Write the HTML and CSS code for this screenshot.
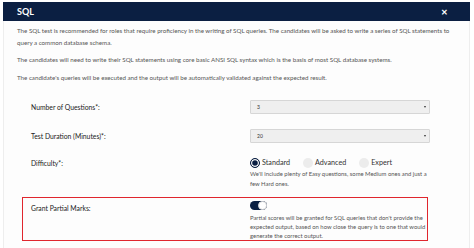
FILE: index.html
```html
<!DOCTYPE html>
<html>
<head>
<meta charset="utf-8">
<link rel="stylesheet" href="styles.css">
</head>
<body>
<div class="modal">
  <div class="header">
    <span class="title">SQL</span>
    <span class="close">✕</span>
  </div>
  <div class="body">
    <div class="intro">
      <p>The SQL test is recommended for roles that require proficiency in the writing of SQL queries. The candidates will be asked to write a series of SQL statements to query a common database schema.</p>
      <p>The candidates will need to write their SQL statements using core basic ANSI SQL syntax which is the basis of most SQL database systems.</p>
      <p>The candidate's queries will be executed and the output will be automatically validated against the expected result.</p>
    </div>
    <div class="form">
      <div class="row row-select">
        <div class="label">Number of Questions*:</div>
        <div class="control"><div class="select"><span>3</span><span class="caret"></span></div></div>
      </div>
      <div class="row row-select">
        <div class="label">Test Duration (Minutes)*:</div>
        <div class="control"><div class="select"><span>20</span><span class="caret"></span></div></div>
      </div>
      <div class="row row-diff">
        <div class="label">Difficulty*:</div>
        <div class="control">
          <div class="radios">
            <span class="radio"><span class="dot on"></span>Standard</span>
            <span class="radio"><span class="dot"></span>Advanced</span>
            <span class="radio"><span class="dot"></span>Expert</span>
          </div>
          <div class="help narrow">We'll include plenty of Easy questions, some Medium ones and just a few Hard ones.</div>
        </div>
      </div>
      <div class="row row-partial">
        <div class="label">Grant Partial Marks:</div>
        <div class="control">
          <div class="toggle"><span class="knob"></span></div>
          <div class="help tight">Partial scores will be granted for SQL queries that don't provide the expected output, based on how close the query is to one that would generate the correct output.</div>
        </div>
      </div>
    </div>
  </div>
</div>
</body>
</html>
```
FILE: styles.css
```css
html, body {
  margin: 0;
  padding: 0;
  background: #ffffff;
}
body {
  font-family: Lato, "Open Sans", sans-serif;
  color: #555;
}
.modal {
  margin: 2px 4px 0 3px;
}
.header {
  height: 19px;
  background: #0b1f42;
  display: flex;
  align-items: center;
  justify-content: space-between;
  padding: 0 22px 0 14px;
  color: #fff;
}
.title {
  font-weight: 700;
  font-size: 9px;
}
.close {
  font-weight: 700;
  font-size: 8px;
}
.body {
  border-left: 1px solid #eee;
  border-right: 1px solid #eee;
  background: #fdfdfd;
  height: 227px;
}
.intro {
  padding: 4px 13px 0 13px;
  font-size: 6.2px;
  line-height: 11.5px;
  color: #555;
}
.intro p {
  margin: 0 0 6px 0;
}
.form {
  padding: 3px 0 0 18px;
}
.row {
  display: flex;
}
.label {
  width: 219px;
  padding-left: 9px;
  font-size: 6.8px;
  color: #222;
  flex: none;
}
.control {
  width: 180px;
}
.row-select {
  height: 29px;
  align-items: center;
}
.select {
  height: 14px;
  background: #efefef;
  border: 1px solid #d6d6d6;
  border-radius: 1px;
  display: flex;
  align-items: center;
  justify-content: space-between;
  padding: 0 3px 0 6px;
  font-size: 5px;
  color: #333;
  box-sizing: border-box;
}
.caret {
  width: 0;
  height: 0;
  border-left: 1.6px solid transparent;
  border-right: 1.6px solid transparent;
  border-top: 2px solid #333;
}
.row-diff {
  padding-top: 7px;
  height: 40px;
}
.row-diff .label {
  padding-top: 2px;
}
.radios {
  display: flex;
  align-items: center;
  font-size: 7.2px;
  color: #333;
  height: 11px;
}
.radio {
  display: flex;
  align-items: center;
  margin-right: 13px;
}
.dot {
  width: 10px;
  height: 10px;
  border-radius: 50%;
  background: #ececec;
  box-sizing: border-box;
  margin-right: 2px;
}
.dot.on {
  background: #0b1f42;
  border: 1.5px solid #0b1f42;
  box-shadow: inset 0 0 0 1.2px #fff;
}
.help {
  font-size: 5.9px;
  line-height: 10px;
  color: #555;
  margin-top: 1px;
}
.help.narrow {
  width: 178px;
}
.help.tight {
  line-height: 9px;
  margin-top: 0;
}
.row-partial {
  border: 1px solid #e0262e;
  width: 406px;
  height: 44px;
  box-sizing: border-box;
  padding-top: 3px;
}
.row-partial .label {
  width: 219px;
  padding-left: 8px;
  padding-top: 3px;
}
.row-partial .control {
  width: 178px;
}
.toggle {
  width: 17px;
  height: 9px;
  border-radius: 5px;
  background: #0b1f42;
  position: relative;
  margin-bottom: 3px;
}
.knob {
  position: absolute;
  right: 0;
  top: 0;
  width: 9px;
  height: 9px;
  border-radius: 50%;
  background: #fff;
  border: 1px solid #ddd;
  box-sizing: border-box;
}
```
